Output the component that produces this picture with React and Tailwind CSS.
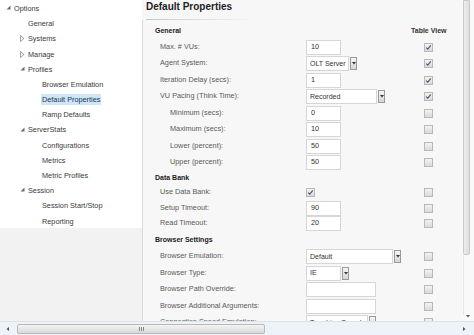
import React from "react";

const tree = [
  { label: "Options", indent: 14, arrow: "open", ax: 6 },
  { label: "General", indent: 28 },
  { label: "Systems", indent: 28, arrow: "closed", ax: 20 },
  { label: "Manage", indent: 28, arrow: "closed", ax: 20 },
  { label: "Profiles", indent: 28, arrow: "open", ax: 20 },
  { label: "Browser Emulation", indent: 42 },
  { label: "Default Properties", indent: 42, selected: true },
  { label: "Ramp Defaults", indent: 42 },
  { label: "ServerStats", indent: 28, arrow: "open", ax: 20 },
  { label: "Configurations", indent: 42 },
  { label: "Metrics", indent: 42 },
  { label: "Metric Profiles", indent: 42 },
  { label: "Session", indent: 28, arrow: "open", ax: 20 },
  { label: "Session Start/Stop", indent: 42 },
  { label: "Reporting", indent: 42 },
];

function Arrow({ kind }) {
  if (kind === "open") {
    return (
      <svg width="5" height="5" viewBox="0 0 5 5">
        <path d="M4.5 0.5 L4.5 4.5 L0.5 4.5 Z" fill="#6b6b6b" />
      </svg>
    );
  }
  return (
    <svg width="5" height="7" viewBox="0 0 5 7">
      <path d="M0.5 0.5 L4 3.5 L0.5 6.5 Z" fill="#fff" stroke="#8a8a8a" strokeWidth="0.8" />
    </svg>
  );
}

function Check({ on }) {
  return (
    <div className="w-[9px] h-[9px] border border-[#b8b8b8] bg-gradient-to-b from-[#f3f3f3] to-[#dadada] flex items-center justify-center">
      {on && (
        <svg width="7" height="7" viewBox="0 0 7 7">
          <path d="M1.3 3.6 L2.8 5.2 L5.8 1.4" fill="none" stroke="#4a5570" strokeWidth="1.1" />
        </svg>
      )}
    </div>
  );
}

function DropBtn() {
  return (
    <div className="w-[7px] h-[13px] ml-[1px] border border-[#9a9a9a] bg-gradient-to-b from-[#f5f5f5] to-[#d6d6d6] flex items-center justify-center">
      <svg width="4" height="3" viewBox="0 0 4 3">
        <path d="M0 0 L4 0 L2 2.5 Z" fill="#333" />
      </svg>
    </div>
  );
}

function Field({ f }) {
  if (!f) return null;
  if (f.type === "input") {
    return (
      <div className={`h-[15px] ${f.w} border border-[#d6d6d6] bg-white pl-[4px] flex items-center text-[7.3px] text-[#333]`}>
        {f.value}
      </div>
    );
  }
  if (f.type === "select") {
    return (
      <div className="flex items-center">
        <div className={`h-[15px] ${f.w} border border-[#d6d6d6] bg-white pl-[3px] flex items-center text-[7px] text-[#333] whitespace-nowrap overflow-hidden`}>
          {f.value}
        </div>
        <DropBtn />
      </div>
    );
  }
  if (f.type === "check") return <Check on={f.on} />;
  return null;
}

const rows = [
  { head: "General", h: "h-[16px]", table: true },
  { label: "Max. # VUs:", lv: 1, f: { type: "input", w: "w-[35px]", value: "10" }, on: true },
  { label: "Agent System:", lv: 1, f: { type: "select", w: "w-[43px]", value: "OLT Server" }, on: true },
  { label: "Iteration Delay (secs):", lv: 1, f: { type: "input", w: "w-[35px]", value: "1" }, on: true },
  { label: "VU Pacing (Think Time):", lv: 1, f: { type: "select", w: "w-[71px]", value: "Recorded" }, on: true },
  { label: "Minimum (secs):", lv: 2, f: { type: "input", w: "w-[35px]", value: "0" } },
  { label: "Maximum (secs):", lv: 2, f: { type: "input", w: "w-[35px]", value: "10" } },
  { label: "Lower (percent):", lv: 2, f: { type: "input", w: "w-[35px]", value: "50" } },
  { label: "Upper (percent):", lv: 2, f: { type: "input", w: "w-[35px]", value: "50" } },
  { head: "Data Bank", h: "h-[14px]" },
  { label: "Use Data Bank:", lv: 1, h: "h-[15.5px]", f: { type: "check", on: true } },
  { label: "Setup Timeout:", lv: 1, h: "h-[15.5px]", f: { type: "input", w: "w-[35px]", value: "90" } },
  { label: "Read Timeout:", lv: 1, h: "h-[15.5px]", f: { type: "input", w: "w-[35px]", value: "20" } },
  { head: "Browser Settings", h: "h-[17px]" },
  { label: "Browser Emulation:", lv: 1, f: { type: "select", w: "w-[87px]", value: "Default" } },
  { label: "Browser Type:", lv: 1, f: { type: "select", w: "w-[35px]", value: "IE" } },
  { label: "Browser Path Override:", lv: 1, f: { type: "input", w: "w-[70px]", value: "" } },
  { label: "Browser Additional Arguments:", lv: 1, f: { type: "input", w: "w-[70px]", value: "" } },
  { label: "Connection Speed Emulation:", lv: 1, f: { type: "select", w: "w-[62px]", value: "True Line Speed" } },
];

export default function App() {
  return (
    <div className="w-[474px] h-[335px] flex flex-col bg-white overflow-hidden font-['Liberation_Sans',Arial,sans-serif]">
      <div className="flex flex-1 min-h-0">
        {/* tree */}
        <aside className="w-[142px] flex flex-col shrink-0">
          <div className="bg-white h-[228px] pt-[1px]">
            {tree.map((t) => (
              <div key={t.label} className="relative h-[15.2px] flex items-center">
                {t.arrow && (
                  <span className="absolute top-[4px]" style={{ left: t.ax }}>
                    <Arrow kind={t.arrow} />
                  </span>
                )}
                <span
                  className={`text-[7.3px] leading-none whitespace-nowrap ${
                    t.selected ? "bg-[#cfe6f6] text-[#1d3557] px-[1px] py-[2px]" : "text-[#3a3a3a]"
                  }`}
                  style={{ marginLeft: t.selected ? t.indent - 1 : t.indent }}
                >
                  {t.label}
                </span>
              </div>
            ))}
          </div>
          <div className="flex-1 bg-[#f2f2f2]" />
        </aside>

        {/* properties */}
        <main className="flex-1 flex min-w-0 bg-[#f7f7f7]">
          <div className="flex-1 flex flex-col min-w-0">
            <div className="h-[20px] pl-[4px] relative">
              <div className="text-[10px] font-bold text-[#1e1e1e] leading-none pt-[2px]">Default Properties</div>
              <div className="absolute left-[4px] bottom-0 w-[110px] h-px bg-gradient-to-r from-[#c6c6c6] to-transparent" />
            </div>
            <div className="flex-1 border-l border-[#dcdcdc] pt-[3px] overflow-hidden">
              {rows.map((r, i) =>
                r.head ? (
                  <div key={i} className={`${r.h} flex items-center`}>
                    <div className="w-[281px] pl-[12px] text-[7px] font-bold text-[#222]">{r.head}</div>
                    {r.table && <div className="text-[7px] font-bold text-[#333] -ml-[13px] whitespace-nowrap">Table View</div>}
                  </div>
                ) : (
                  <div key={i} className={`${r.h || "h-[16.5px]"} flex items-center`}>
                    <div
                      className={`w-[163px] shrink-0 text-[7.3px] text-[#5a5a5a] whitespace-nowrap ${
                        r.lv === 2 ? "pl-[27px]" : "pl-[17px]"
                      }`}
                    >
                      {r.label}
                    </div>
                    <div className="w-[118px] shrink-0 flex items-center">
                      <Field f={r.f} />
                    </div>
                    <Check on={r.on} />
                  </div>
                )
              )}
            </div>
          </div>

          {/* vertical scrollbar */}
          <div className="w-[12px] shrink-0 bg-[#f9f9f9] flex flex-col items-start pl-[1px]">
            <div className="w-[7px] h-[255px] border border-[#c9c9c9] rounded-b-[2px] bg-gradient-to-r from-[#ececec] to-[#dedede]" />
            <div className="flex-1 w-[7px] border-l border-[#e6e6e6]" />
            <div className="w-[9px] flex justify-center pb-[3px]">
              <svg width="4" height="3" viewBox="0 0 4 3">
                <path d="M0 0 L4 0 L2 2.5 Z" fill="#555" />
              </svg>
            </div>
          </div>
        </main>
      </div>

      {/* horizontal scrollbar */}
      <div className="h-[14px] shrink-0 bg-[#eef3f9] flex items-center border-t border-[#e2e2e2]">
        <div className="w-[14px] flex justify-center">
          <svg width="3" height="4" viewBox="0 0 3 4">
            <path d="M3 0 L3 4 L0.5 2 Z" fill="#555" />
          </svg>
        </div>
        <div className="ml-[3px] w-[248px] h-[10px] border border-[#b9b9b9] rounded-[2px] bg-gradient-to-b from-[#f4f4f4] to-[#d9d9d9] flex items-center justify-center">
          <div className="flex gap-[1px]">
            <div className="w-px h-[4px] bg-[#888]" />
            <div className="w-px h-[4px] bg-[#888]" />
            <div className="w-px h-[4px] bg-[#888]" />
          </div>
        </div>
        <div className="flex-1" />
        <div className="w-[20px] flex justify-center">
          <svg width="3" height="4" viewBox="0 0 3 4">
            <path d="M0 0 L0 4 L2.5 2 Z" fill="#555" />
          </svg>
        </div>
      </div>
    </div>
  );
}
